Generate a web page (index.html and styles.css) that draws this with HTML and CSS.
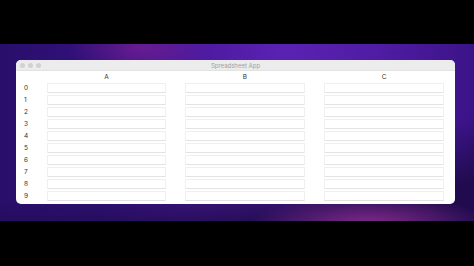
FILE: index.html
```html
<!DOCTYPE html>
<html>
<head>
<meta charset="utf-8">
<link rel="stylesheet" href="styles.css">
</head>
<body>
<div class="screen">
  <div class="bar"></div>
  <div class="desktop">
    <div class="window">
      <div class="titlebar">
        <div class="lights"><span></span><span></span><span></span></div>
        <div class="title">Spreadsheet App</div>
      </div>
      <div class="sheet">
        <div class="corner"></div><div class="colhead">A</div><div class="colhead">B</div><div class="colhead">C</div>
        <div class="rowhead">0</div><div class="cell"></div><div class="cell"></div><div class="cell"></div>
        <div class="rowhead">1</div><div class="cell"></div><div class="cell"></div><div class="cell"></div>
        <div class="rowhead">2</div><div class="cell"></div><div class="cell"></div><div class="cell"></div>
        <div class="rowhead">3</div><div class="cell"></div><div class="cell"></div><div class="cell"></div>
        <div class="rowhead">4</div><div class="cell"></div><div class="cell"></div><div class="cell"></div>
        <div class="rowhead">5</div><div class="cell"></div><div class="cell"></div><div class="cell"></div>
        <div class="rowhead">6</div><div class="cell"></div><div class="cell"></div><div class="cell"></div>
        <div class="rowhead">7</div><div class="cell"></div><div class="cell"></div><div class="cell"></div>
        <div class="rowhead">8</div><div class="cell"></div><div class="cell"></div><div class="cell"></div>
        <div class="rowhead">9</div><div class="cell"></div><div class="cell"></div><div class="cell"></div>
      </div>
    </div>
  </div>
  <div class="bar"></div>
</div>
</body>
</html>
```
FILE: styles.css
```css
html, body { margin: 0; padding: 0; }
body { width: 474px; height: 266px; background: #000; font-family: "Inter", "Liberation Sans", sans-serif; overflow: hidden; }
.screen { display: flex; flex-direction: column; height: 266px; }
.bar { height: 44px; background: #000; flex: none; }
.bar:last-child { height: 45px; }
.desktop {
  height: 177px; flex: none;
  padding: 16px 19px 0 16px; box-sizing: border-box;
  background:
    radial-gradient(ellipse 120px 30px at 370px 180px, rgba(190,60,170,0.6), rgba(190,60,170,0) 100%),
    radial-gradient(ellipse 70px 30px at 140px 4px, rgba(140,35,150,0.55), rgba(140,35,150,0) 100%),
    linear-gradient(170deg, rgba(25,8,60,0) 60%, rgba(22,8,58,0.75) 85%),
    linear-gradient(90deg, #290e6a 0%, #33117d 22%, #4d1aa0 42%, #5a22b2 60%, #4f1ca3 80%, #3b1388 100%);
}
.window {
  width: 439px; height: 144px; background: #fff; border-radius: 5px; overflow: hidden;
  display: flex; flex-direction: column;
}
.titlebar {
  height: 11px; background: #ececec; border-bottom: 1px solid #e2e2e2; box-sizing: border-box;
  display: flex; align-items: center; position: relative; flex: none;
}
.lights { display: flex; gap: 3px; padding-left: 4px; }
.lights span { width: 5px; height: 5px; border-radius: 50%; background: #d2d2d2; display: block; }
.title { position: absolute; left: 0; right: 0; text-align: center; font-size: 6px; color: #a0a0a0; line-height: 11px; }
.sheet {
  display: grid;
  grid-template-columns: 12px 119px 120px 120px;
  column-gap: 19px;
  grid-template-rows: 11px repeat(10, 12px);
}
.colhead { font-size: 6.5px; color: #333; text-align: center; line-height: 11px; padding-top: 1px; }
.rowhead { font-size: 6.5px; color: #333; line-height: 12px; padding-left: 8px; white-space: nowrap; }
.cell { margin: 1px 0; border: 1px solid #efefef; border-bottom-color: #e2e2e2; border-radius: 1px; background: #fff; }
```
